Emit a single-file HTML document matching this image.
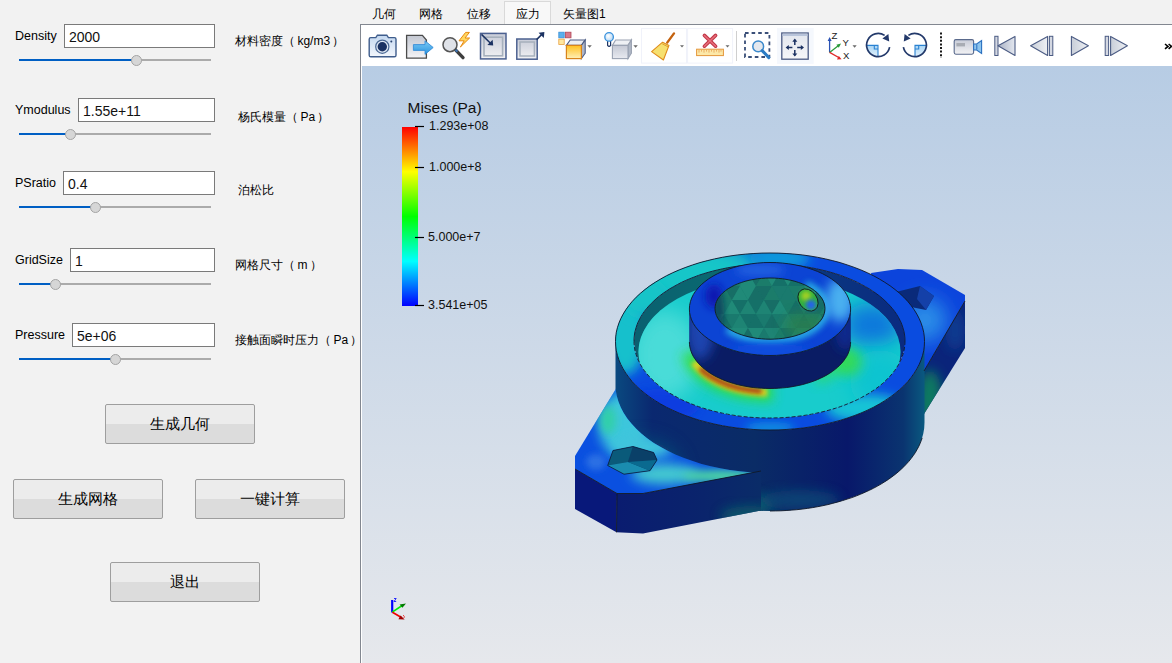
<!DOCTYPE html>
<html><head><meta charset="utf-8">
<style>
*{box-sizing:border-box;margin:0;padding:0}
html,body{width:1172px;height:663px;overflow:hidden;background:#f2f2f2;font-family:"Liberation Sans",sans-serif;color:#000;position:relative}
.a{position:absolute;white-space:nowrap}
.lbl{font-size:12.5px;line-height:14px}
.inp{position:absolute;background:#fff;border:1px solid #7a7a7a;font-size:14px;line-height:24px;padding-left:4px;color:#111}
.trk{position:absolute;height:2px;background:#ababab}
.fill{position:absolute;left:0;top:0;height:2px;background:#005fc4}
.hdl{position:absolute;width:11px;height:11px;border-radius:50%;background:#d6d6d6;border:1px solid #a4a4a4;top:-4.5px}
.cn{font-size:12px;line-height:14px}
.btn{position:absolute;border:1px solid #9e9e9e;border-radius:2px;background:linear-gradient(#ececec 0,#ececec 50%,#dcdcdc 50%,#dcdcdc 100%);font-size:15px;text-align:center}
.tab{position:absolute;top:5.5px;font-size:12px;line-height:16px}
</style></head>
<body>
<!-- left panel -->
<div class="a lbl" style="left:15px;top:29px">Density</div>
<div class="inp" style="left:64px;top:24px;width:151px;height:24px">2000</div>
<div class="trk" style="left:19px;top:59px;width:192px"><div class="fill" style="width:118px"></div><div class="hdl" style="left:112px"></div></div>
<div class="a cn" style="left:235px;top:34px">材料密度（&#8201;kg/m3&#8201;）</div>

<div class="a lbl" style="left:15px;top:103px">Ymodulus</div>
<div class="inp" style="left:78px;top:98px;width:137px;height:24px">1.55e+11</div>
<div class="trk" style="left:19px;top:133px;width:192px"><div class="fill" style="width:52px"></div><div class="hdl" style="left:46px"></div></div>
<div class="a cn" style="left:238px;top:110px">杨氏模量（&#8201;Pa&#8201;）</div>

<div class="a lbl" style="left:15px;top:176px">PSratio</div>
<div class="inp" style="left:63px;top:171px;width:152px;height:24px">0.4</div>
<div class="trk" style="left:19px;top:206px;width:192px"><div class="fill" style="width:77px"></div><div class="hdl" style="left:71px"></div></div>
<div class="a cn" style="left:238px;top:183px">泊松比</div>

<div class="a lbl" style="left:15px;top:253px">GridSize</div>
<div class="inp" style="left:70px;top:248px;width:145px;height:24px">1</div>
<div class="trk" style="left:19px;top:283px;width:192px"><div class="fill" style="width:37px"></div><div class="hdl" style="left:31px"></div></div>
<div class="a cn" style="left:235px;top:258px">网格尺寸（&#8201;m&#8201;）</div>

<div class="a lbl" style="left:15px;top:328px">Pressure</div>
<div class="inp" style="left:72px;top:323px;width:143px;height:24px">5e+06</div>
<div class="trk" style="left:19px;top:358px;width:192px"><div class="fill" style="width:97px"></div><div class="hdl" style="left:91px"></div></div>
<div class="a cn" style="left:235px;top:333px">接触面瞬时压力（&#8201;Pa&#8201;）</div>

<div class="btn" style="left:105px;top:404px;width:150px;height:40px;line-height:38px">生成几何</div>
<div class="btn" style="left:13px;top:479px;width:150px;height:40px;line-height:38px">生成网格</div>
<div class="btn" style="left:195px;top:479px;width:150px;height:40px;line-height:38px">一键计算</div>
<div class="btn" style="left:110px;top:562px;width:150px;height:40px;line-height:38px">退出</div>

<!-- tabs -->
<div class="a" style="left:504px;top:1px;width:47px;height:24px;background:#f8f8f8;border:1px solid #d9d9d9;border-bottom:none"></div>
<div class="tab" style="left:372px">几何</div>
<div class="tab" style="left:419px">网格</div>
<div class="tab" style="left:467px">位移</div>
<div class="tab" style="left:516px">应力</div>
<div class="tab" style="left:563px">矢量图1</div>

<!-- main panel frame -->
<div class="a" style="left:360px;top:24px;width:812px;height:639px;border-left:1px solid #828790;border-top:1px solid #828790;background:#fff"></div>
<div id="view" class="a" style="left:362px;top:66px;width:810px;height:597px;background:linear-gradient(#b7cce4 0%,#e6e8ec 100%)"></div>

<!-- toolbar -->
<!--TB-->
<svg class="a" style="left:361px;top:25px" width="811" height="41" viewBox="361 25 811 41">
<defs>
<linearGradient id="gCam" x1="0" y1="0" x2="0" y2="1"><stop offset="0" stop-color="#c4d8f0"/><stop offset="1" stop-color="#f2f6fc"/></linearGradient>
<linearGradient id="gPage" x1="0" y1="0" x2="0" y2="1"><stop offset="0" stop-color="#c4c8d2"/><stop offset="1" stop-color="#f4f4f6"/></linearGradient>
<linearGradient id="gArr" x1="0" y1="0" x2="0" y2="1"><stop offset="0" stop-color="#7ccaf4"/><stop offset="1" stop-color="#2a94e0"/></linearGradient>
<linearGradient id="gPan" x1="0" y1="0" x2="0" y2="1"><stop offset="0" stop-color="#e2e6ee"/><stop offset="1" stop-color="#f6f6f8"/></linearGradient>
<linearGradient id="gSq" x1="0" y1="0" x2="0" y2="1"><stop offset="0" stop-color="#c8ccd8"/><stop offset="1" stop-color="#f2f2f4"/></linearGradient>
<linearGradient id="gYel" x1="0" y1="0" x2="0" y2="1"><stop offset="0" stop-color="#ffc020"/><stop offset="1" stop-color="#fff0b8"/></linearGradient>
<linearGradient id="gGry" x1="0" y1="0" x2="0" y2="1"><stop offset="0" stop-color="#c4c8d4"/><stop offset="1" stop-color="#e8eaf0"/></linearGradient>
<linearGradient id="gQ" x1="0" y1="0" x2="0" y2="1"><stop offset="0" stop-color="#a8d4f4"/><stop offset="1" stop-color="#e4f2fc"/></linearGradient>
<linearGradient id="gTri" x1="0" y1="0" x2="1" y2="0"><stop offset="0" stop-color="#aab2c4"/><stop offset="1" stop-color="#e4e8f0"/></linearGradient>
<linearGradient id="gTri2" x1="0" y1="0" x2="1" y2="0"><stop offset="0" stop-color="#c8ced8"/><stop offset="1" stop-color="#eef0f4"/></linearGradient>
<radialGradient id="gBulb" cx="0.4" cy="0.4" r="0.6"><stop offset="0" stop-color="#ffffff"/><stop offset="1" stop-color="#b8d8f4"/></radialGradient>
</defs>
<!-- camera -->
<path d="M369.2 39.2 Q369.2 37.6 370.8 37.6 L375.8 37.6 L377.4 35.2 L386.8 35.2 L388.4 37.6 L394.4 37.6 Q396 37.6 396 39.2 L396 55.2 Q396 56.8 394.4 56.8 L370.8 56.8 Q369.2 56.8 369.2 55.2 Z" fill="url(#gCam)" stroke="#3f5d8c" stroke-width="1.4"/>
<circle cx="382.3" cy="46.7" r="6.6" fill="#dfe8f4" stroke="#4a6894" stroke-width="1.2"/>
<circle cx="382.3" cy="46.7" r="4.7" fill="#1b3263"/>
<circle cx="391.3" cy="41.6" r="1" fill="#2a4470"/>
<!-- file arrow -->
<path d="M406.6 35.4 L422.4 35.4 L426.4 40 L426.4 58.2 L406.6 58.2 Z" fill="url(#gPage)" stroke="#4b4b4b" stroke-width="1.3"/>
<path d="M413.4 44.6 L425 44.6 L425 40.8 L433.2 47.5 L425 54.4 L425 50.4 L413.4 50.4 Z" fill="url(#gArr)" stroke="#2b86d6" stroke-width="0.8"/>
<!-- magnifier + lightning -->
<path d="M465.6 32.4 L459 40.8 L464.2 40.8 L460.4 47 L469.6 38 L465 38 L469.4 32.4 Z" fill="#ffd860" stroke="#e88a10" stroke-width="1"/>
<circle cx="450" cy="44.7" r="7" fill="#dfe2e8" stroke="#555" stroke-width="1.5"/>
<path d="M456 50.4 L463 57.6" stroke="#3e3e3e" stroke-width="3.4" stroke-linecap="round"/>
<path d="M455.5 49.8 L457.4 51.8" stroke="#3a70b0" stroke-width="2"/>
<!-- square arrow in -->
<rect x="480.5" y="33.4" width="25.5" height="25.5" fill="url(#gSq)" stroke="#4c6190" stroke-width="1.5"/>
<rect x="484" y="37.2" width="18.6" height="18.6" fill="none" stroke="#a6b0bc" stroke-width="1.6"/>
<path d="M481.5 34.4 L490.5 43.2" stroke="#1c3262" stroke-width="1.5"/>
<path d="M493.2 45.6 L487.4 45 L492.6 39.8 Z" fill="#1c3262"/>
<!-- square arrow out -->
<rect x="516.8" y="39" width="20.4" height="20.2" fill="url(#gSq)" stroke="#4c6190" stroke-width="1.5"/>
<rect x="520" y="42" width="14.4" height="14" fill="none" stroke="#a6b0bc" stroke-width="1.5"/>
<path d="M536.6 39.6 L541.6 34.6" stroke="#1c3262" stroke-width="1.5"/>
<path d="M544.4 32 L543.8 38 L538.6 32.8 Z" fill="#1c3262"/>
<!-- cube color -->
<rect x="558.8" y="32.2" width="5.4" height="5.6" fill="#5ab0ec" stroke="#3a90d8" stroke-width="0.8"/>
<rect x="565.4" y="32.2" width="5.6" height="5.6" fill="#d87888" stroke="#b04858" stroke-width="0.8"/>
<rect x="558.8" y="39.1" width="5.4" height="5.4" fill="#ffe8a0" stroke="#e8a040" stroke-width="0.8"/>
<path d="M566.4 45.4 L570.2 40 L585.2 40 L581.4 45.4 Z" fill="#eceef2" stroke="#4c5c84" stroke-width="1.1"/>
<path d="M581.4 45.4 L585.2 40 L585.2 53.2 L581.4 58.6 Z" fill="#aeb6c8" stroke="#4c5c84" stroke-width="1.1"/>
<rect x="566.4" y="45.4" width="15" height="13.2" fill="url(#gYel)" stroke="#d8841c" stroke-width="1.2"/>
<path d="M587.4 45.2 L591.8 45.2 L589.6 47.8 Z" fill="#6a6a6a"/>
<!-- bulb cube -->
<path d="M612.4 45.4 L615.6 40 L631.4 40 L628 45.4 Z" fill="#eef0f4" stroke="#9aa2b2" stroke-width="1.1"/>
<path d="M628 45.4 L631.4 40 L631.4 53.2 L628 58.6 Z" fill="#b0b8c6" stroke="#9aa2b2" stroke-width="1.1"/>
<rect x="612.4" y="45.4" width="15.6" height="13.2" fill="url(#gGry)" stroke="#9aa2b2" stroke-width="1.1"/>
<path d="M607.6 40.5 L607.6 45.4 Q609 47.4 610.6 45.4 L610.6 40.5" fill="#fff" stroke="#1e3462" stroke-width="1.2"/>
<circle cx="609.1" cy="36.9" r="4.3" fill="url(#gBulb)" stroke="#3a92dc" stroke-width="1.3"/>
<path d="M633.4 45.2 L637.8 45.2 L635.6 47.8 Z" fill="#6a6a6a"/>
<!-- broom -->
<rect x="641.5" y="28.6" width="45" height="34.5" fill="none" stroke="#f0f2fa" stroke-width="1"/>
<rect x="687.6" y="28.6" width="45" height="34.5" fill="none" stroke="#f0f2fa" stroke-width="1"/>
<path d="M674 33.4 L667.2 42.6" stroke="#c4620e" stroke-width="2.4" stroke-linecap="round"/>
<path d="M662.6 42.2 L669 45.4 L663.4 60 L651.6 51.6 Z" fill="#f6e070" stroke="#e08c1a" stroke-width="1.1" stroke-linejoin="round"/>
<path d="M662.2 43.8 L668 46.8" stroke="#e0a030" stroke-width="1"/>
<path d="M680 45.2 L684 45.2 L682 47.6 Z" fill="#6a6a6a"/>
<!-- ruler x -->
<path d="M704.4 35.4 L715.6 46.2 M715.6 35.4 L704.4 46.2" stroke="#c23848" stroke-width="3.6" stroke-linecap="round"/>
<path d="M704.4 35.4 L715.6 46.2 M715.6 35.4 L704.4 46.2" stroke="#e8707c" stroke-width="1.4" stroke-linecap="round"/>
<rect x="696.6" y="49.2" width="26.8" height="6.4" fill="#fce8a8" stroke="#e4963a" stroke-width="1"/>
<path d="M699 50 V52.6 M701.5 50 V51.6 M704 50 V52.6 M706.5 50 V51.6 M709 50 V52.6 M711.5 50 V51.6 M714 50 V52.6 M716.5 50 V51.6 M719 50 V52.6 M721 50 V51.6" stroke="#e8a050" stroke-width="0.8"/>
<path d="M725.5 45.2 L729.5 45.2 L727.5 47.6 Z" fill="#6a6a6a"/>
<!-- separator -->
<line x1="736.5" y1="31" x2="736.5" y2="61" stroke="#cfcfcf" stroke-width="1"/>
<!-- dashed zoom -->
<rect x="745" y="33" width="24.4" height="24" fill="none" stroke="#3a4f78" stroke-width="1.8" stroke-dasharray="3.6 3"/>
<circle cx="758.2" cy="46.4" r="5.4" fill="#e4e8ee" stroke="#3c8acc" stroke-width="1.5"/>
<path d="M762.2 50.6 L768.8 57.6" stroke="#2c7cc4" stroke-width="3" stroke-linecap="round"/>
<!-- pan -->
<rect x="777" y="28" width="36.7" height="35.9" fill="#f5f8fd"/>
<rect x="781.8" y="33" width="26.4" height="26.2" fill="url(#gPan)" stroke="#4a5a82" stroke-width="1.3"/>
<rect x="782.5" y="33.6" width="25" height="2.4" fill="#b8c4da"/>
<g stroke="#1c3262" stroke-width="1.5" fill="none"><path d="M787 47.5 H792.4 M797.2 47.5 H802.6 M794.8 39.8 V45 M794.8 50 V55.4"/></g>
<g fill="#1c3262"><path d="M785.6 47.5 L788.8 45 L788.8 50 Z"/><path d="M804 47.5 L800.8 45 L800.8 50 Z"/><path d="M794.8 38.6 L792.3 41.8 L797.3 41.8 Z"/><path d="M794.8 56.6 L792.3 53.4 L797.3 53.4 Z"/></g>
<!-- axes -->
<path d="M829.6 52.4 V39" stroke="#2a52b4" stroke-width="1.3"/><path d="M829.6 37 L827.6 41 L831.6 41 Z" fill="#2a52b4"/>
<path d="M829.6 52.4 L839.2 45" stroke="#2a9a3a" stroke-width="1.3"/><path d="M841 43.6 L836.4 44.8 L838.8 47.8 Z" fill="#2a9a3a"/>
<path d="M829.6 52.4 L839.6 58" stroke="#e02828" stroke-width="1.3"/><path d="M841.6 59.2 L837 59.6 L838.8 56 Z" fill="#e02828"/>
<g font-family="Liberation Sans" font-size="9.6" fill="#222"><text x="831.6" y="38.6">Z</text><text x="842.6" y="46.2">Y</text><text x="843" y="58.8">X</text></g>
<path d="M852.5 45.2 L856.7 45.2 L854.6 47.8 Z" fill="#6a6a6a"/>
<!-- rotate cw -->
<path d="M878 45.4 L866.4 45.4 A11.6 11.6 0 0 0 878 57 Z" fill="url(#gQ)"/>
<path d="M866.4 45.4 H878 V57 M874.3 45.4 V49 H878" fill="none" stroke="#2a82d2" stroke-width="1.1"/>
<path d="M889.6 47.2 A11.6 11.6 0 1 1 884.6 35.4" fill="none" stroke="#23396a" stroke-width="1.7"/>
<path d="M882.4 38.6 L888.4 34 L889.2 41.4 Z" fill="#23396a"/>
<!-- rotate ccw -->
<path d="M915 45.4 L926.6 45.4 A11.6 11.6 0 0 1 915 57 Z" fill="url(#gQ)"/>
<path d="M926.6 45.4 H915 V57 M918.7 45.4 V49 H915" fill="none" stroke="#23396a" stroke-width="0" />
<path d="M926.6 45.4 H915 V57 M918.7 45.4 V49 H915" fill="none" stroke="#2a82d2" stroke-width="1.1"/>
<path d="M903.4 47.2 A11.6 11.6 0 1 0 908.4 35.4" fill="none" stroke="#23396a" stroke-width="1.7"/>
<path d="M910.6 38.6 L904.6 34 L903.8 41.4 Z" fill="#23396a"/>
<!-- dotted separator -->
<line x1="941" y1="32.6" x2="941" y2="58" stroke="#000" stroke-width="1.8" stroke-dasharray="2 1.6"/>
<!-- video camera -->
<rect x="954.2" y="39.6" width="19.4" height="14.6" rx="1.6" fill="url(#gSq)" stroke="#5a6a8c" stroke-width="1.1"/>
<rect x="956.4" y="43" width="8.6" height="3.4" fill="#a8acb4"/>
<path d="M973.6 44 L976.6 44 L981.6 40.6 L981.6 53.4 L976.6 50 L973.6 50 Z" fill="#8cc4ee" stroke="#2a70c0" stroke-width="1.1"/><path d="M976.8 44.4 V49.6" stroke="#2a70c0" stroke-width="1"/>
<!-- first -->
<rect x="994.8" y="36.3" width="3.2" height="19.2" fill="#d4d8e2" stroke="#4c5c84" stroke-width="1"/>
<path d="M998 45.8 L1015 36.4 L1015 55.4 Z" fill="url(#gTri)" stroke="#4c5c84" stroke-width="1.1" stroke-linejoin="round"/>
<!-- prev -->
<path d="M1030.6 45.8 L1047.6 36.4 L1047.6 55.4 Z" fill="url(#gTri2)" stroke="#4c5c84" stroke-width="1.1" stroke-linejoin="round"/>
<rect x="1049.4" y="36.3" width="3.4" height="19.2" fill="#d4d8e2" stroke="#4c5c84" stroke-width="1"/>
<!-- play -->
<path d="M1071.4 36.4 L1071.4 55.4 L1088.4 45.8 Z" fill="url(#gTri2)" stroke="#4c5c84" stroke-width="1.1" stroke-linejoin="round"/>
<!-- last -->
<rect x="1105.2" y="36.3" width="3.4" height="19.2" fill="#d4d8e2" stroke="#4c5c84" stroke-width="1"/>
<path d="M1110.6 36.4 L1110.6 55.4 L1127.4 45.8 Z" fill="url(#gTri2)" stroke="#4c5c84" stroke-width="1.1" stroke-linejoin="round"/>
<!-- chevrons -->
<path d="M1165 44 L1168 46.4 L1165 48.8 M1168.6 44 L1171.6 46.4 L1168.6 48.8" fill="none" stroke="#000" stroke-width="1.6"/>
</svg>
<!--/TB-->

<!-- legend -->
<svg class="a" style="left:362px;top:66px" width="810" height="597" viewBox="362 66 810 597">
<defs>
<linearGradient id="rb" x1="0" y1="0" x2="0" y2="1">
<stop offset="0" stop-color="#ff0000"/><stop offset="0.25" stop-color="#ffff00"/><stop offset="0.5" stop-color="#00ff00"/><stop offset="0.75" stop-color="#00ffff"/><stop offset="1" stop-color="#0000ff"/>
</linearGradient>
</defs>
<rect x="402" y="127" width="16" height="179" fill="url(#rb)"/>
<g stroke="#000" stroke-width="1.2">
<line x1="415" y1="126.5" x2="424" y2="126.5"/>
<line x1="415" y1="167.5" x2="424" y2="167.5"/>
<line x1="415" y1="237.5" x2="424" y2="237.5"/>
<line x1="415" y1="305.5" x2="424" y2="305.5"/>
</g>
<g font-family="Liberation Sans" font-size="12.5" fill="#111">
<text x="429" y="130">1.293e+08</text>
<text x="429" y="171">1.000e+8</text>
<text x="428" y="241">5.000e+7</text>
<text x="428" y="308.5">3.541e+05</text>
</g>
<text x="407.5" y="112.5" font-family="Liberation Sans" font-size="15.5" fill="#111">Mises (Pa)</text>
<!--AX-->
<g>
<path d="M392.2 612.5 L392.2 600" stroke="#0000ff" stroke-width="2.2"/>
<path d="M394 598.5 L396.2 598.5 L394 601.5 L396.2 601.5" stroke="#0000ff" stroke-width="0.8" fill="none"/>
<path d="M392.2 612.2 L403 605" stroke="#00ee00" stroke-width="1.6"/>
<path d="M406 603.4 L399.6 604.4 L402.4 607.8 Z" fill="#007a00"/>
<path d="M392.4 612.2 L401 617.2" stroke="#ee0000" stroke-width="1.6"/>
<path d="M404.6 619.4 L398.4 619.2 L400.6 615.6 Z" fill="#a00000"/>
<path d="M403 615 Q405 616 404 618" stroke="#ee0000" stroke-width="0.7" fill="none"/>
</g>
<!--/AX-->
<!--MODEL-->
<defs>
<filter id="b2" x="-50%" y="-50%" width="200%" height="200%"><feGaussianBlur stdDeviation="2"/></filter>
<filter id="b3" x="-50%" y="-50%" width="200%" height="200%"><feGaussianBlur stdDeviation="3"/></filter>
<filter id="b4" x="-50%" y="-50%" width="200%" height="200%"><feGaussianBlur stdDeviation="4"/></filter>
<filter id="b6" x="-50%" y="-50%" width="200%" height="200%"><feGaussianBlur stdDeviation="6"/></filter>
<filter id="b10" x="-80%" y="-80%" width="260%" height="260%"><feGaussianBlur stdDeviation="10"/></filter>
</defs>
<clipPath id="cRT"><path d="M871.0 273.0 L898.0 269.0 L922.0 270.0 L965.0 295.0 L965.0 301.0 L924.0 371.0 L880.0 330.0 Z" clip-rule="nonzero"/></clipPath>
<clipPath id="cRF"><path d="M965.0 301.0 L965.0 348.0 L924.0 414.0 L924.0 371.0 Z" clip-rule="nonzero"/></clipPath>
<path d="M871.0 273.0 L898.0 269.0 L922.0 270.0 L965.0 295.0 L965.0 301.0 L924.0 371.0 L880.0 330.0 Z" fill="#0c44dc"/>
<g clip-path="url(#cRT)"><ellipse cx="925" cy="320" rx="22" ry="22" fill="#2a8ee8" filter="url(#b10)" opacity="1"/></g>
<path d="M965.0 301.0 L965.0 348.0 L924.0 414.0 L924.0 371.0 Z" fill="#0a247a"/>
<g clip-path="url(#cRF)"><ellipse cx="930" cy="400" rx="12" ry="30" fill="#0a7a60" filter="url(#b6)" opacity="1"/><ellipse cx="955" cy="330" rx="10" ry="20" fill="#0a3a90" filter="url(#b6)" opacity="1"/></g>
<path d="M896 292 L920 286 L934 296 L926 310 L906 306 Z" fill="#0a2a7a"/>
<path d="M920 286 L934 296 L926 310 L917 299 Z" fill="#1440a8"/>
<clipPath id="cCyl"><path d="M924.5 422.5 L924.2 428.3 L923.2 434.1 L921.5 439.8 L919.2 445.4 L916.3 450.9 L912.7 456.4 L908.6 461.6 L903.8 466.8 L898.5 471.7 L892.6 476.4 L886.2 480.9 L879.2 485.1 L871.9 489.0 L864.1 492.7 L855.8 496.1 L847.2 499.1 L838.3 501.9 L829.1 504.3 L819.7 506.3 L810.0 508.0 L800.1 509.3 L790.2 510.2 L780.1 510.8 L770.0 511.0 L759.9 510.8 L749.8 510.2 L739.9 509.3 L730.0 508.0 L720.3 506.3 L710.9 504.3 L701.7 501.9 L692.8 499.1 L684.2 496.1 L675.9 492.7 L668.1 489.0 L660.8 485.1 L653.8 480.9 L647.4 476.4 L641.5 471.7 L636.2 466.8 L631.4 461.6 L627.3 456.4 L623.7 450.9 L620.8 445.4 L618.5 439.8 L616.8 434.1 L615.8 428.3 L615.5 422.5 L615.5 341.5 L615.8 347.3 L616.8 353.1 L618.5 358.8 L620.8 364.4 L623.7 369.9 L627.3 375.4 L631.4 380.6 L636.2 385.8 L641.5 390.7 L647.4 395.4 L653.8 399.9 L660.8 404.1 L668.1 408.0 L675.9 411.7 L684.2 415.1 L692.8 418.1 L701.7 420.9 L710.9 423.3 L720.3 425.3 L730.0 427.0 L739.9 428.3 L749.8 429.2 L759.9 429.8 L770.0 430.0 L780.1 429.8 L790.2 429.2 L800.1 428.3 L810.0 427.0 L819.7 425.3 L829.1 423.3 L838.3 420.9 L847.2 418.1 L855.8 415.1 L864.1 411.7 L871.9 408.0 L879.2 404.1 L886.2 399.9 L892.6 395.4 L898.5 390.7 L903.8 385.8 L908.6 380.6 L912.7 375.4 L916.3 369.9 L919.2 364.4 L921.5 358.8 L923.2 353.1 L924.2 347.3 L924.5 341.5 Z" clip-rule="nonzero"/></clipPath>
<linearGradient id="gCylH" x1="615" y1="0" x2="925" y2="0" gradientUnits="userSpaceOnUse"><stop offset="0" stop-color="#0a4a80"/><stop offset="0.12" stop-color="#0a2870"/><stop offset="0.45" stop-color="#0a2c66"/><stop offset="0.75" stop-color="#08186a"/><stop offset="0.93" stop-color="#0a3470"/><stop offset="1" stop-color="#0a5a80"/></linearGradient>
<path d="M924.5 422.5 L924.2 428.3 L923.2 434.1 L921.5 439.8 L919.2 445.4 L916.3 450.9 L912.7 456.4 L908.6 461.6 L903.8 466.8 L898.5 471.7 L892.6 476.4 L886.2 480.9 L879.2 485.1 L871.9 489.0 L864.1 492.7 L855.8 496.1 L847.2 499.1 L838.3 501.9 L829.1 504.3 L819.7 506.3 L810.0 508.0 L800.1 509.3 L790.2 510.2 L780.1 510.8 L770.0 511.0 L759.9 510.8 L749.8 510.2 L739.9 509.3 L730.0 508.0 L720.3 506.3 L710.9 504.3 L701.7 501.9 L692.8 499.1 L684.2 496.1 L675.9 492.7 L668.1 489.0 L660.8 485.1 L653.8 480.9 L647.4 476.4 L641.5 471.7 L636.2 466.8 L631.4 461.6 L627.3 456.4 L623.7 450.9 L620.8 445.4 L618.5 439.8 L616.8 434.1 L615.8 428.3 L615.5 422.5 L615.5 341.5 L615.8 347.3 L616.8 353.1 L618.5 358.8 L620.8 364.4 L623.7 369.9 L627.3 375.4 L631.4 380.6 L636.2 385.8 L641.5 390.7 L647.4 395.4 L653.8 399.9 L660.8 404.1 L668.1 408.0 L675.9 411.7 L684.2 415.1 L692.8 418.1 L701.7 420.9 L710.9 423.3 L720.3 425.3 L730.0 427.0 L739.9 428.3 L749.8 429.2 L759.9 429.8 L770.0 430.0 L780.1 429.8 L790.2 429.2 L800.1 428.3 L810.0 427.0 L819.7 425.3 L829.1 423.3 L838.3 420.9 L847.2 418.1 L855.8 415.1 L864.1 411.7 L871.9 408.0 L879.2 404.1 L886.2 399.9 L892.6 395.4 L898.5 390.7 L903.8 385.8 L908.6 380.6 L912.7 375.4 L916.3 369.9 L919.2 364.4 L921.5 358.8 L923.2 353.1 L924.2 347.3 L924.5 341.5 Z" fill="url(#gCylH)"/>
<g clip-path="url(#cCyl)">
<ellipse cx="640" cy="470" rx="40" ry="30" fill="#0a5a7a" filter="url(#b10)" opacity="0.8"/>
<ellipse cx="730" cy="505" rx="45" ry="12" fill="#0a6470" filter="url(#b6)" opacity="0.9"/>
<ellipse cx="800" cy="500" rx="40" ry="10" fill="#0a4a78" filter="url(#b6)" opacity="0.8"/>
</g>
<clipPath id="cNotEF"><path d="M300 200 L1100 200 L1100 600 L300 600 Z M924.5 384.5 L924.2 390.3 L923.2 396.1 L921.5 401.8 L919.2 407.4 L916.3 412.9 L912.7 418.4 L908.6 423.6 L903.8 428.8 L898.5 433.7 L892.6 438.4 L886.2 442.9 L879.2 447.1 L871.9 451.0 L864.1 454.7 L855.8 458.1 L847.2 461.1 L838.3 463.9 L829.1 466.3 L819.7 468.3 L810.0 470.0 L800.1 471.3 L790.2 472.2 L780.1 472.8 L770.0 473.0 L759.9 472.8 L749.8 472.2 L739.9 471.3 L730.0 470.0 L720.3 468.3 L710.9 466.3 L701.7 463.9 L692.8 461.1 L684.2 458.1 L675.9 454.7 L668.1 451.0 L660.8 447.1 L653.8 442.9 L647.4 438.4 L641.5 433.7 L636.2 428.8 L631.4 423.6 L627.3 418.4 L623.7 412.9 L620.8 407.4 L618.5 401.8 L616.8 396.1 L615.8 390.3 L615.5 384.5 L615.8 378.7 L616.8 372.9 L618.5 367.2 L620.8 361.6 L623.7 356.1 L627.3 350.6 L631.4 345.4 L636.2 340.2 L641.5 335.3 L647.4 330.6 L653.8 326.1 L660.8 321.9 L668.1 318.0 L675.9 314.3 L684.2 310.9 L692.7 307.9 L701.7 305.1 L710.9 302.7 L720.3 300.7 L730.0 299.0 L739.9 297.7 L749.8 296.8 L759.9 296.2 L770.0 296.0 L780.1 296.2 L790.2 296.8 L800.1 297.7 L810.0 299.0 L819.7 300.7 L829.1 302.7 L838.3 305.1 L847.2 307.9 L855.8 310.9 L864.1 314.3 L871.9 318.0 L879.2 321.9 L886.2 326.1 L892.6 330.6 L898.5 335.3 L903.8 340.2 L908.6 345.4 L912.7 350.6 L916.3 356.1 L919.2 361.6 L921.5 367.2 L923.2 372.9 L924.2 378.7 L924.5 384.5 Z" clip-rule="evenodd"/></clipPath>
<clipPath id="cLT"><path d="M617.0 387.0 L575.0 456.0 L575.0 469.0 L617.0 493.5 L643.0 493.5 L761.0 471.0 L775.0 440.0 L700.0 380.0 Z" clip-rule="nonzero"/></clipPath>
<clipPath id="cLF"><path d="M617.0 493.5 L616.5 532.3 L643.0 533.6 L761.0 510.5 L761.0 471.0 L643.0 493.5 Z" clip-rule="nonzero"/></clipPath>
<g clip-path="url(#cNotEF)">
<path d="M617.0 387.0 L575.0 456.0 L575.0 469.0 L617.0 493.5 L643.0 493.5 L761.0 471.0 L775.0 440.0 L700.0 380.0 Z" fill="#0a50e0"/>
<g clip-path="url(#cLT)"><ellipse cx="625" cy="425" rx="26" ry="34" fill="#3cc6dc" filter="url(#b6)" opacity="1"/><ellipse cx="608" cy="420" rx="8" ry="14" fill="#30d0a8" filter="url(#b4)" opacity="1"/><ellipse cx="665" cy="474" rx="34" ry="10" fill="#44ccd0" filter="url(#b6)" opacity="1"/><ellipse cx="720" cy="476" rx="38" ry="6" fill="#50dca0" filter="url(#b4)" opacity="1"/><ellipse cx="645" cy="447" rx="28" ry="12" fill="#40c4dc" filter="url(#b6)" opacity="1"/><ellipse cx="596" cy="462" rx="10" ry="8" fill="#2a70e4" filter="url(#b3)" opacity="1"/></g>
</g>
<path d="M575.0 469.0 L575.0 509.0 L616.5 532.3 L617.0 493.5 Z" fill="#08187a"/>
<linearGradient id="gLF" x1="617" y1="0" x2="761" y2="0" gradientUnits="userSpaceOnUse"><stop offset="0" stop-color="#0a1c70"/><stop offset="0.6" stop-color="#0a246c"/><stop offset="1" stop-color="#0a2c68"/></linearGradient>
<path d="M617.0 493.5 L616.5 532.3 L643.0 533.6 L761.0 510.5 L761.0 471.0 L643.0 493.5 Z" fill="url(#gLF)"/>
<g clip-path="url(#cLF)"><ellipse cx="750" cy="516" rx="30" ry="10" fill="#0a5a6a" filter="url(#b6)" opacity="0.9"/></g>
<path d="M613.0 450.5 L633.0 446.5 L653.6 452.5 L657.0 460.0 L650.0 470.7 L624.0 474.2 L607.7 465.5 Z" fill="#0a4a70"/>
<path d="M613 450.5 L633 446.5 L628 462 L607.7 465.5 Z" fill="#0a5a7a"/>
<path d="M633 446.5 L653.6 452.5 L657 460 L628 462 Z" fill="#0a4068"/>
<path d="M607.7 465.5 L628 462 L650 470.7 L624 474.2 Z" fill="#1a8cb0"/>
<path d="M628 462 L657 460 L650 470.7 Z" fill="#0a6a90"/>
<path d="M613.0 450.5 L633.0 446.5 L653.6 452.5 L657.0 460.0 L650.0 470.7 L624.0 474.2 L607.7 465.5 Z" fill="none" stroke="#0a1a40" stroke-width="0.8"/>
<clipPath id="cRim"><path d="M924.5 341.5 L924.2 347.3 L923.2 353.1 L921.5 358.8 L919.2 364.4 L916.3 369.9 L912.7 375.4 L908.6 380.6 L903.8 385.8 L898.5 390.7 L892.6 395.4 L886.2 399.9 L879.2 404.1 L871.9 408.0 L864.1 411.7 L855.8 415.1 L847.2 418.1 L838.3 420.9 L829.1 423.3 L819.7 425.3 L810.0 427.0 L800.1 428.3 L790.2 429.2 L780.1 429.8 L770.0 430.0 L759.9 429.8 L749.8 429.2 L739.9 428.3 L730.0 427.0 L720.3 425.3 L710.9 423.3 L701.7 420.9 L692.8 418.1 L684.2 415.1 L675.9 411.7 L668.1 408.0 L660.8 404.1 L653.8 399.9 L647.4 395.4 L641.5 390.7 L636.2 385.8 L631.4 380.6 L627.3 375.4 L623.7 369.9 L620.8 364.4 L618.5 358.8 L616.8 353.1 L615.8 347.3 L615.5 341.5 L615.8 335.7 L616.8 329.9 L618.5 324.2 L620.8 318.6 L623.7 313.1 L627.3 307.6 L631.4 302.4 L636.2 297.2 L641.5 292.3 L647.4 287.6 L653.8 283.1 L660.8 278.9 L668.1 275.0 L675.9 271.3 L684.2 267.9 L692.7 264.9 L701.7 262.1 L710.9 259.7 L720.3 257.7 L730.0 256.0 L739.9 254.7 L749.8 253.8 L759.9 253.2 L770.0 253.0 L780.1 253.2 L790.2 253.8 L800.1 254.7 L810.0 256.0 L819.7 257.7 L829.1 259.7 L838.3 262.1 L847.2 264.9 L855.8 267.9 L864.1 271.3 L871.9 275.0 L879.2 278.9 L886.2 283.1 L892.6 287.6 L898.5 292.3 L903.8 297.2 L908.6 302.4 L912.7 307.6 L916.3 313.1 L919.2 318.6 L921.5 324.2 L923.2 329.9 L924.2 335.7 L924.5 341.5 Z M905.0 341.0 L904.7 346.0 L903.8 351.1 L902.4 356.0 L900.4 360.9 L897.8 365.8 L894.7 370.5 L891.0 375.1 L886.8 379.5 L882.2 383.8 L877.0 387.9 L871.4 391.8 L865.3 395.4 L858.8 398.9 L852.0 402.1 L844.8 405.0 L837.2 407.7 L829.4 410.1 L821.4 412.1 L813.1 413.9 L804.6 415.4 L795.9 416.5 L787.2 417.3 L778.4 417.8 L769.5 418.0 L760.6 417.8 L751.8 417.3 L743.1 416.5 L734.4 415.4 L725.9 413.9 L717.6 412.1 L709.6 410.1 L701.8 407.7 L694.2 405.0 L687.0 402.1 L680.2 398.9 L673.7 395.4 L667.6 391.8 L662.0 387.9 L656.8 383.8 L652.2 379.5 L648.0 375.1 L644.3 370.5 L641.2 365.8 L638.6 360.9 L636.6 356.0 L635.2 351.1 L634.3 346.0 L634.0 341.0 L634.3 336.0 L635.2 330.9 L636.6 326.0 L638.6 321.1 L641.2 316.2 L644.3 311.5 L648.0 306.9 L652.2 302.5 L656.8 298.2 L662.0 294.1 L667.6 290.2 L673.7 286.6 L680.2 283.1 L687.0 279.9 L694.2 277.0 L701.8 274.3 L709.6 271.9 L717.6 269.9 L725.9 268.1 L734.4 266.6 L743.1 265.5 L751.8 264.7 L760.6 264.2 L769.5 264.0 L778.4 264.2 L787.2 264.7 L795.9 265.5 L804.6 266.6 L813.1 268.1 L821.4 269.9 L829.4 271.9 L837.2 274.3 L844.8 277.0 L852.0 279.9 L858.8 283.1 L865.3 286.6 L871.4 290.2 L877.0 294.1 L882.2 298.2 L886.8 302.5 L891.0 306.9 L894.7 311.5 L897.8 316.2 L900.4 321.1 L902.4 326.0 L903.8 330.9 L904.7 336.0 L905.0 341.0 Z" clip-rule="evenodd"/></clipPath>
<path d="M924.5 341.5 L924.2 347.3 L923.2 353.1 L921.5 358.8 L919.2 364.4 L916.3 369.9 L912.7 375.4 L908.6 380.6 L903.8 385.8 L898.5 390.7 L892.6 395.4 L886.2 399.9 L879.2 404.1 L871.9 408.0 L864.1 411.7 L855.8 415.1 L847.2 418.1 L838.3 420.9 L829.1 423.3 L819.7 425.3 L810.0 427.0 L800.1 428.3 L790.2 429.2 L780.1 429.8 L770.0 430.0 L759.9 429.8 L749.8 429.2 L739.9 428.3 L730.0 427.0 L720.3 425.3 L710.9 423.3 L701.7 420.9 L692.8 418.1 L684.2 415.1 L675.9 411.7 L668.1 408.0 L660.8 404.1 L653.8 399.9 L647.4 395.4 L641.5 390.7 L636.2 385.8 L631.4 380.6 L627.3 375.4 L623.7 369.9 L620.8 364.4 L618.5 358.8 L616.8 353.1 L615.8 347.3 L615.5 341.5 L615.8 335.7 L616.8 329.9 L618.5 324.2 L620.8 318.6 L623.7 313.1 L627.3 307.6 L631.4 302.4 L636.2 297.2 L641.5 292.3 L647.4 287.6 L653.8 283.1 L660.8 278.9 L668.1 275.0 L675.9 271.3 L684.2 267.9 L692.7 264.9 L701.7 262.1 L710.9 259.7 L720.3 257.7 L730.0 256.0 L739.9 254.7 L749.8 253.8 L759.9 253.2 L770.0 253.0 L780.1 253.2 L790.2 253.8 L800.1 254.7 L810.0 256.0 L819.7 257.7 L829.1 259.7 L838.3 262.1 L847.2 264.9 L855.8 267.9 L864.1 271.3 L871.9 275.0 L879.2 278.9 L886.2 283.1 L892.6 287.6 L898.5 292.3 L903.8 297.2 L908.6 302.4 L912.7 307.6 L916.3 313.1 L919.2 318.6 L921.5 324.2 L923.2 329.9 L924.2 335.7 L924.5 341.5 Z M905.0 341.0 L904.7 346.0 L903.8 351.1 L902.4 356.0 L900.4 360.9 L897.8 365.8 L894.7 370.5 L891.0 375.1 L886.8 379.5 L882.2 383.8 L877.0 387.9 L871.4 391.8 L865.3 395.4 L858.8 398.9 L852.0 402.1 L844.8 405.0 L837.2 407.7 L829.4 410.1 L821.4 412.1 L813.1 413.9 L804.6 415.4 L795.9 416.5 L787.2 417.3 L778.4 417.8 L769.5 418.0 L760.6 417.8 L751.8 417.3 L743.1 416.5 L734.4 415.4 L725.9 413.9 L717.6 412.1 L709.6 410.1 L701.8 407.7 L694.2 405.0 L687.0 402.1 L680.2 398.9 L673.7 395.4 L667.6 391.8 L662.0 387.9 L656.8 383.8 L652.2 379.5 L648.0 375.1 L644.3 370.5 L641.2 365.8 L638.6 360.9 L636.6 356.0 L635.2 351.1 L634.3 346.0 L634.0 341.0 L634.3 336.0 L635.2 330.9 L636.6 326.0 L638.6 321.1 L641.2 316.2 L644.3 311.5 L648.0 306.9 L652.2 302.5 L656.8 298.2 L662.0 294.1 L667.6 290.2 L673.7 286.6 L680.2 283.1 L687.0 279.9 L694.2 277.0 L701.8 274.3 L709.6 271.9 L717.6 269.9 L725.9 268.1 L734.4 266.6 L743.1 265.5 L751.8 264.7 L760.6 264.2 L769.5 264.0 L778.4 264.2 L787.2 264.7 L795.9 265.5 L804.6 266.6 L813.1 268.1 L821.4 269.9 L829.4 271.9 L837.2 274.3 L844.8 277.0 L852.0 279.9 L858.8 283.1 L865.3 286.6 L871.4 290.2 L877.0 294.1 L882.2 298.2 L886.8 302.5 L891.0 306.9 L894.7 311.5 L897.8 316.2 L900.4 321.1 L902.4 326.0 L903.8 330.9 L904.7 336.0 L905.0 341.0 Z" fill="#0a4ce0" fill-rule="evenodd"/>
<g clip-path="url(#cRim)">
<ellipse cx="690" cy="275" rx="75" ry="35" fill="#14c6c8" filter="url(#b10)" opacity="1"/>
<ellipse cx="625" cy="330" rx="22" ry="45" fill="#12c0cc" filter="url(#b6)" opacity="1"/>
<ellipse cx="645" cy="298" rx="22" ry="18" fill="#14c4c8" filter="url(#b6)" opacity="1"/>
<ellipse cx="780" cy="258" rx="30" ry="12" fill="#1098dc" filter="url(#b6)" opacity="1"/>
<ellipse cx="660" cy="405" rx="40" ry="16" fill="#0a3ce0" filter="url(#b4)" opacity="1"/>
<ellipse cx="865" cy="408" rx="40" ry="14" fill="#16c4d6" filter="url(#b6)" opacity="1"/>
<ellipse cx="770" cy="428" rx="25" ry="6" fill="#108ce0" filter="url(#b4)" opacity="1"/>
</g>
<clipPath id="cE1"><path d="M905.0 341.0 L904.7 346.0 L903.8 351.1 L902.4 356.0 L900.4 360.9 L897.8 365.8 L894.7 370.5 L891.0 375.1 L886.8 379.5 L882.2 383.8 L877.0 387.9 L871.4 391.8 L865.3 395.4 L858.8 398.9 L852.0 402.1 L844.8 405.0 L837.2 407.7 L829.4 410.1 L821.4 412.1 L813.1 413.9 L804.6 415.4 L795.9 416.5 L787.2 417.3 L778.4 417.8 L769.5 418.0 L760.6 417.8 L751.8 417.3 L743.1 416.5 L734.4 415.4 L725.9 413.9 L717.6 412.1 L709.6 410.1 L701.8 407.7 L694.2 405.0 L687.0 402.1 L680.2 398.9 L673.7 395.4 L667.6 391.8 L662.0 387.9 L656.8 383.8 L652.2 379.5 L648.0 375.1 L644.3 370.5 L641.2 365.8 L638.6 360.9 L636.6 356.0 L635.2 351.1 L634.3 346.0 L634.0 341.0 L634.3 336.0 L635.2 330.9 L636.6 326.0 L638.6 321.1 L641.2 316.2 L644.3 311.5 L648.0 306.9 L652.2 302.5 L656.8 298.2 L662.0 294.1 L667.6 290.2 L673.7 286.6 L680.2 283.1 L687.0 279.9 L694.2 277.0 L701.8 274.3 L709.6 271.9 L717.6 269.9 L725.9 268.1 L734.4 266.6 L743.1 265.5 L751.8 264.7 L760.6 264.2 L769.5 264.0 L778.4 264.2 L787.2 264.7 L795.9 265.5 L804.6 266.6 L813.1 268.1 L821.4 269.9 L829.4 271.9 L837.2 274.3 L844.8 277.0 L852.0 279.9 L858.8 283.1 L865.3 286.6 L871.4 290.2 L877.0 294.1 L882.2 298.2 L886.8 302.5 L891.0 306.9 L894.7 311.5 L897.8 316.2 L900.4 321.1 L902.4 326.0 L903.8 330.9 L904.7 336.0 L905.0 341.0 Z" clip-rule="nonzero"/></clipPath>
<linearGradient id="gWall" x1="634" y1="0" x2="905" y2="0" gradientUnits="userSpaceOnUse"><stop offset="0" stop-color="#0a6070"/><stop offset="0.35" stop-color="#0a6a70"/><stop offset="0.6" stop-color="#0a3a80"/><stop offset="1" stop-color="#0a2a80"/></linearGradient>
<g clip-path="url(#cE1)">
<ellipse cx="769.5" cy="341.0" rx="135.5" ry="77.0" fill="url(#gWall)"/>
<ellipse cx="769.5" cy="352.0" rx="131.0" ry="75.0" fill="#18cccc"/>
<clipPath id="cE2"><path d="M900.5 352.0 L900.2 356.9 L899.4 361.8 L898.0 366.6 L896.0 371.4 L893.5 376.1 L890.5 380.7 L887.0 385.2 L882.9 389.5 L878.4 393.7 L873.4 397.7 L868.0 401.5 L862.1 405.0 L855.9 408.4 L849.2 411.5 L842.3 414.4 L835.0 417.0 L827.4 419.3 L819.6 421.3 L811.6 423.0 L803.4 424.4 L795.1 425.6 L786.6 426.4 L778.1 426.8 L769.5 427.0 L760.9 426.8 L752.4 426.4 L743.9 425.6 L735.6 424.4 L727.4 423.0 L719.4 421.3 L711.6 419.3 L704.0 417.0 L696.7 414.4 L689.8 411.5 L683.1 408.4 L676.9 405.0 L671.0 401.5 L665.6 397.7 L660.6 393.7 L656.1 389.5 L652.0 385.2 L648.5 380.7 L645.5 376.1 L643.0 371.4 L641.0 366.6 L639.6 361.8 L638.8 356.9 L638.5 352.0 L638.8 347.1 L639.6 342.2 L641.0 337.4 L643.0 332.6 L645.5 327.9 L648.5 323.3 L652.0 318.8 L656.1 314.5 L660.6 310.3 L665.6 306.3 L671.0 302.5 L676.9 299.0 L683.1 295.6 L689.8 292.5 L696.7 289.6 L704.0 287.0 L711.6 284.7 L719.4 282.7 L727.4 281.0 L735.6 279.6 L743.9 278.4 L752.4 277.6 L760.9 277.2 L769.5 277.0 L778.1 277.2 L786.6 277.6 L795.1 278.4 L803.4 279.6 L811.6 281.0 L819.6 282.7 L827.4 284.7 L835.0 287.0 L842.3 289.6 L849.2 292.5 L855.9 295.6 L862.1 299.0 L868.0 302.5 L873.4 306.3 L878.4 310.3 L882.9 314.5 L887.0 318.8 L890.5 323.3 L893.5 327.9 L896.0 332.6 L898.0 337.4 L899.4 342.2 L900.2 347.1 L900.5 352.0 Z" clip-rule="nonzero"/></clipPath>
<g clip-path="url(#cE2)">
<ellipse cx="665" cy="355" rx="35" ry="45" fill="#48dcd8" filter="url(#b10)" opacity="1"/>
<ellipse cx="872" cy="325" rx="30" ry="22" fill="#1078dc" filter="url(#b10)" opacity="1"/>
<ellipse cx="880" cy="380" rx="30" ry="30" fill="#10c4d0" filter="url(#b10)" opacity="1"/>
<ellipse cx="848" cy="362" rx="14" ry="14" fill="#30d860" filter="url(#b6)" opacity="1"/>
</g>
</g>
<path d="M772.8 392.5 L768.9 392.5 L764.9 392.4 L761.0 392.2 L757.1 391.9 L753.2 391.5 L749.4 391.0 L745.6 390.3 L741.9 389.6 L738.2 388.7 L734.7 387.8 L731.2 386.7 L727.8 385.6 L724.5 384.4 L721.3 383.0 L718.2 381.6 L715.2 380.1 L712.4 378.5 L709.7 376.9 L707.2 375.1 L704.8 373.3 L702.6 371.5 L700.5 369.5 L698.6 367.5 L696.8 365.5 L695.3 363.4 L693.9 361.3 L692.7 359.1 L691.7 356.9 L690.8 354.7 L690.2 352.5" fill="none" stroke="#30e030" stroke-width="18" filter="url(#b6)" opacity="0.85"/>
<path d="M767.2 392.5 L764.0 392.4 L760.8 392.2 L757.7 392.0 L754.5 391.6 L751.4 391.2 L748.3 390.8 L745.3 390.3 L742.3 389.7 L739.3 389.0 L736.4 388.3 L733.5 387.5 L730.7 386.6 L727.9 385.7 L725.2 384.7 L722.6 383.6 L720.1 382.5 L717.6 381.3 L715.2 380.1 L712.9 378.8 L710.7 377.5 L708.6 376.1 L706.6 374.7 L704.7 373.2 L702.9 371.7 L701.2 370.2 L699.6 368.6 L698.1 367.0 L696.7 365.3 L695.4 363.6 L694.3 361.9" fill="none" stroke="#d8d020" stroke-width="8" filter="url(#b2)"/>
<path d="M761.6 391.2 L759.1 391.1 L756.6 390.8 L754.1 390.6 L751.6 390.3 L749.1 389.9 L746.7 389.5 L744.3 389.1 L741.9 388.6 L739.5 388.1 L737.2 387.5 L734.9 386.9 L732.7 386.2 L730.4 385.5 L728.2 384.8 L726.1 384.0 L724.0 383.2 L721.9 382.3 L719.9 381.4 L718.0 380.5 L716.1 379.6 L714.2 378.6 L712.4 377.5 L710.7 376.5 L709.0 375.4 L707.4 374.3 L705.8 373.1 L704.3 371.9 L702.9 370.7 L701.5 369.5 L700.2 368.2" fill="none" stroke="#a83010" stroke-width="4.5" filter="url(#b2)"/>
<path d="M847.9 354.0 L847.3 355.1 L846.8 356.1 L846.2 357.1 L845.6 358.2 L844.9 359.2 L844.2 360.2 L843.4 361.2 L842.6 362.1 L841.8 363.1 L840.9 364.1 L840.0 365.0 L839.1 365.9 L838.1 366.9 L837.1 367.8 L836.0 368.7 L834.9 369.6 L833.8 370.4 L832.6 371.3 L831.4 372.1 L830.2 372.9 L828.9 373.7 L827.7 374.5 L826.3 375.3 L825.0 376.0 L823.6 376.7 L822.2 377.4 L820.7 378.1 L819.3 378.8 L817.8 379.5 L816.2 380.1" fill="none" stroke="#30e050" stroke-width="10" filter="url(#b6)" opacity="0.7"/>
<path d="M634.0 341.0 L634.1 338.0 L634.4 335.0 L634.9 331.9 L635.7 329.0 L636.6 326.0 L637.7 323.0 L639.1 320.1 L640.6 317.2 L642.4 314.3 L644.3 311.5 L646.4 308.8 L648.8 306.0 L651.3 303.4 L654.0 300.8 L656.8 298.2 L659.9 295.7 L663.1 293.3 L666.5 291.0 L670.0 288.7 L673.7 286.6 L677.5 284.5 L681.5 282.4 L685.6 280.5 L689.9 278.7 L694.2 277.0 L698.7 275.3 L703.3 273.8 L708.0 272.4 L712.8 271.1 L717.6 269.9 L722.6 268.8 L727.6 267.8 L732.7 266.9 L737.9 266.1 L743.1 265.5 L748.3 264.9 L753.6 264.5 L758.9 264.2 L764.2 264.1 L769.5 264.0 L774.8 264.1 L780.1 264.2 L785.4 264.5 L790.7 264.9 L795.9 265.5 L801.1 266.1 L806.3 266.9 L811.4 267.8 L816.4 268.8 L821.4 269.9 L826.2 271.1 L831.0 272.4 L835.7 273.8 L840.3 275.3 L844.8 277.0 L849.1 278.7 L853.4 280.5 L857.5 282.4 L861.5 284.5 L865.3 286.6 L869.0 288.7 L872.5 291.0 L875.9 293.3 L879.1 295.7 L882.2 298.2 L885.0 300.8 L887.7 303.4 L890.2 306.0 L892.6 308.8 L894.7 311.5 L896.6 314.3 L898.4 317.2 L899.9 320.1 L901.3 323.0 L902.4 326.0 L903.3 329.0 L904.1 331.9 L904.6 335.0 L904.9 338.0 L905.0 341.0" fill="none" stroke="#111a30" stroke-width="0.9"/>
<path d="M905.0 341.0 L904.9 344.0 L904.6 347.0 L904.1 350.1 L903.3 353.0 L902.4 356.0 L901.3 359.0 L899.9 361.9 L898.4 364.8 L896.6 367.7 L894.7 370.5 L892.6 373.2 L890.2 376.0 L887.7 378.6 L885.0 381.2 L882.2 383.8 L879.1 386.3 L875.9 388.7 L872.5 391.0 L869.0 393.3 L865.3 395.4 L861.5 397.5 L857.5 399.6 L853.4 401.5 L849.1 403.3 L844.8 405.0 L840.3 406.7 L835.7 408.2 L831.0 409.6 L826.2 410.9 L821.4 412.1 L816.4 413.2 L811.4 414.2 L806.3 415.1 L801.1 415.9 L795.9 416.5 L790.7 417.1 L785.4 417.5 L780.1 417.8 L774.8 417.9 L769.5 418.0 L764.2 417.9 L758.9 417.8 L753.6 417.5 L748.3 417.1 L743.1 416.5 L737.9 415.9 L732.7 415.1 L727.6 414.2 L722.6 413.2 L717.6 412.1 L712.8 410.9 L708.0 409.6 L703.3 408.2 L698.7 406.7 L694.2 405.0 L689.9 403.3 L685.6 401.5 L681.5 399.6 L677.5 397.5 L673.7 395.4 L670.0 393.3 L666.5 391.0 L663.1 388.7 L659.9 386.3 L656.8 383.8 L654.0 381.2 L651.3 378.6 L648.8 376.0 L646.4 373.2 L644.3 370.5 L642.4 367.7 L640.6 364.8 L639.1 361.9 L637.7 359.0 L636.6 356.0 L635.7 353.0 L634.9 350.1 L634.4 347.0 L634.1 344.0 L634.0 341.0" fill="none" stroke="#111a30" stroke-width="0.9" stroke-dasharray="4 2"/>
<clipPath id="cBoss"><path d="M850.6 342.0 L850.4 345.0 L849.9 348.1 L849.1 351.1 L847.9 354.0 L846.3 356.9 L844.5 359.8 L842.3 362.6 L839.8 365.2 L837.0 367.8 L833.9 370.3 L830.6 372.7 L827.0 374.9 L823.1 377.0 L819.1 378.9 L814.8 380.7 L810.3 382.3 L805.6 383.7 L800.8 385.0 L795.9 386.0 L790.9 386.9 L785.7 387.6 L780.5 388.1 L775.3 388.4 L770.0 388.5 L764.7 388.4 L759.5 388.1 L754.3 387.6 L749.1 386.9 L744.1 386.0 L739.2 385.0 L734.4 383.7 L729.7 382.3 L725.2 380.7 L720.9 378.9 L716.9 377.0 L713.0 374.9 L709.4 372.7 L706.1 370.3 L703.0 367.8 L700.2 365.2 L697.7 362.6 L695.5 359.8 L693.7 356.9 L692.1 354.0 L690.9 351.1 L690.1 348.1 L689.6 345.0 L689.4 342.0 L689.4 309.0 L689.6 312.0 L690.1 315.1 L690.9 318.1 L692.1 321.0 L693.7 323.9 L695.5 326.8 L697.7 329.6 L700.2 332.2 L703.0 334.8 L706.1 337.3 L709.4 339.7 L713.0 341.9 L716.9 344.0 L720.9 345.9 L725.2 347.7 L729.7 349.3 L734.4 350.7 L739.2 352.0 L744.1 353.0 L749.1 353.9 L754.3 354.6 L759.5 355.1 L764.7 355.4 L770.0 355.5 L775.3 355.4 L780.5 355.1 L785.7 354.6 L790.9 353.9 L795.9 353.0 L800.8 352.0 L805.6 350.7 L810.3 349.3 L814.8 347.7 L819.1 345.9 L823.1 344.0 L827.0 341.9 L830.6 339.7 L833.9 337.3 L837.0 334.8 L839.8 332.2 L842.3 329.6 L844.5 326.8 L846.3 323.9 L847.9 321.0 L849.1 318.1 L849.9 315.1 L850.4 312.0 L850.6 309.0 Z" clip-rule="nonzero"/></clipPath>
<path d="M850.6 342.0 L850.4 345.0 L849.9 348.1 L849.1 351.1 L847.9 354.0 L846.3 356.9 L844.5 359.8 L842.3 362.6 L839.8 365.2 L837.0 367.8 L833.9 370.3 L830.6 372.7 L827.0 374.9 L823.1 377.0 L819.1 378.9 L814.8 380.7 L810.3 382.3 L805.6 383.7 L800.8 385.0 L795.9 386.0 L790.9 386.9 L785.7 387.6 L780.5 388.1 L775.3 388.4 L770.0 388.5 L764.7 388.4 L759.5 388.1 L754.3 387.6 L749.1 386.9 L744.1 386.0 L739.2 385.0 L734.4 383.7 L729.7 382.3 L725.2 380.7 L720.9 378.9 L716.9 377.0 L713.0 374.9 L709.4 372.7 L706.1 370.3 L703.0 367.8 L700.2 365.2 L697.7 362.6 L695.5 359.8 L693.7 356.9 L692.1 354.0 L690.9 351.1 L690.1 348.1 L689.6 345.0 L689.4 342.0 L689.4 309.0 L689.6 312.0 L690.1 315.1 L690.9 318.1 L692.1 321.0 L693.7 323.9 L695.5 326.8 L697.7 329.6 L700.2 332.2 L703.0 334.8 L706.1 337.3 L709.4 339.7 L713.0 341.9 L716.9 344.0 L720.9 345.9 L725.2 347.7 L729.7 349.3 L734.4 350.7 L739.2 352.0 L744.1 353.0 L749.1 353.9 L754.3 354.6 L759.5 355.1 L764.7 355.4 L770.0 355.5 L775.3 355.4 L780.5 355.1 L785.7 354.6 L790.9 353.9 L795.9 353.0 L800.8 352.0 L805.6 350.7 L810.3 349.3 L814.8 347.7 L819.1 345.9 L823.1 344.0 L827.0 341.9 L830.6 339.7 L833.9 337.3 L837.0 334.8 L839.8 332.2 L842.3 329.6 L844.5 326.8 L846.3 323.9 L847.9 321.0 L849.1 318.1 L849.9 315.1 L850.4 312.0 L850.6 309.0 Z" fill="#0a1c64"/>
<g clip-path="url(#cBoss)"><ellipse cx="700" cy="330" rx="14" ry="30" fill="#1a44b0" filter="url(#b6)" opacity="1"/><ellipse cx="845" cy="330" rx="10" ry="20" fill="#0a2a90" filter="url(#b6)" opacity="1"/></g>
<clipPath id="cBT"><path d="M850.6 309.0 L850.4 312.0 L849.9 315.1 L849.1 318.1 L847.9 321.0 L846.3 323.9 L844.5 326.8 L842.3 329.6 L839.8 332.2 L837.0 334.8 L833.9 337.3 L830.6 339.7 L827.0 341.9 L823.1 344.0 L819.1 345.9 L814.8 347.7 L810.3 349.3 L805.6 350.7 L800.8 352.0 L795.9 353.0 L790.9 353.9 L785.7 354.6 L780.5 355.1 L775.3 355.4 L770.0 355.5 L764.7 355.4 L759.5 355.1 L754.3 354.6 L749.1 353.9 L744.1 353.0 L739.2 352.0 L734.4 350.7 L729.7 349.3 L725.2 347.7 L720.9 345.9 L716.9 344.0 L713.0 341.9 L709.4 339.7 L706.1 337.3 L703.0 334.8 L700.2 332.2 L697.7 329.6 L695.5 326.8 L693.7 323.9 L692.1 321.0 L690.9 318.1 L690.1 315.1 L689.6 312.0 L689.4 309.0 L689.6 306.0 L690.1 302.9 L690.9 299.9 L692.1 297.0 L693.7 294.1 L695.5 291.2 L697.7 288.4 L700.2 285.8 L703.0 283.2 L706.1 280.7 L709.4 278.3 L713.0 276.1 L716.9 274.0 L720.9 272.1 L725.2 270.3 L729.7 268.7 L734.4 267.3 L739.2 266.0 L744.1 265.0 L749.1 264.1 L754.3 263.4 L759.5 262.9 L764.7 262.6 L770.0 262.5 L775.3 262.6 L780.5 262.9 L785.7 263.4 L790.9 264.1 L795.9 265.0 L800.8 266.0 L805.6 267.3 L810.3 268.7 L814.8 270.3 L819.1 272.1 L823.1 274.0 L827.0 276.1 L830.6 278.3 L833.9 280.7 L837.0 283.2 L839.8 285.8 L842.3 288.4 L844.5 291.2 L846.3 294.1 L847.9 297.0 L849.1 299.9 L849.9 302.9 L850.4 306.0 L850.6 309.0 Z M825.0 308.6 L824.9 310.6 L824.5 312.6 L823.9 314.6 L823.1 316.5 L822.1 318.4 L820.8 320.3 L819.3 322.1 L817.6 323.9 L815.7 325.6 L813.6 327.2 L811.4 328.8 L808.9 330.2 L806.3 331.6 L803.5 332.9 L800.6 334.0 L797.5 335.1 L794.3 336.0 L791.0 336.9 L787.7 337.6 L784.2 338.2 L780.7 338.6 L777.2 338.9 L773.6 339.1 L770.0 339.2 L766.4 339.1 L762.8 338.9 L759.3 338.6 L755.8 338.2 L752.3 337.6 L749.0 336.9 L745.7 336.0 L742.5 335.1 L739.4 334.0 L736.5 332.9 L733.7 331.6 L731.1 330.2 L728.6 328.8 L726.4 327.2 L724.3 325.6 L722.4 323.9 L720.7 322.1 L719.2 320.3 L717.9 318.4 L716.9 316.5 L716.1 314.6 L715.5 312.6 L715.1 310.6 L715.0 308.6 L715.1 306.6 L715.5 304.6 L716.1 302.6 L716.9 300.7 L717.9 298.8 L719.2 296.9 L720.7 295.1 L722.4 293.3 L724.3 291.6 L726.4 290.0 L728.6 288.4 L731.1 287.0 L733.7 285.6 L736.5 284.3 L739.4 283.2 L742.5 282.1 L745.7 281.2 L749.0 280.3 L752.3 279.6 L755.8 279.0 L759.3 278.6 L762.8 278.3 L766.4 278.1 L770.0 278.0 L773.6 278.1 L777.2 278.3 L780.7 278.6 L784.2 279.0 L787.7 279.6 L791.0 280.3 L794.3 281.2 L797.5 282.1 L800.6 283.2 L803.5 284.3 L806.3 285.6 L808.9 287.0 L811.4 288.4 L813.6 290.0 L815.7 291.6 L817.6 293.3 L819.3 295.1 L820.8 296.9 L822.1 298.8 L823.1 300.7 L823.9 302.6 L824.5 304.6 L824.9 306.6 L825.0 308.6 Z" clip-rule="evenodd"/></clipPath>
<path d="M850.6 309.0 L850.4 312.0 L849.9 315.1 L849.1 318.1 L847.9 321.0 L846.3 323.9 L844.5 326.8 L842.3 329.6 L839.8 332.2 L837.0 334.8 L833.9 337.3 L830.6 339.7 L827.0 341.9 L823.1 344.0 L819.1 345.9 L814.8 347.7 L810.3 349.3 L805.6 350.7 L800.8 352.0 L795.9 353.0 L790.9 353.9 L785.7 354.6 L780.5 355.1 L775.3 355.4 L770.0 355.5 L764.7 355.4 L759.5 355.1 L754.3 354.6 L749.1 353.9 L744.1 353.0 L739.2 352.0 L734.4 350.7 L729.7 349.3 L725.2 347.7 L720.9 345.9 L716.9 344.0 L713.0 341.9 L709.4 339.7 L706.1 337.3 L703.0 334.8 L700.2 332.2 L697.7 329.6 L695.5 326.8 L693.7 323.9 L692.1 321.0 L690.9 318.1 L690.1 315.1 L689.6 312.0 L689.4 309.0 L689.6 306.0 L690.1 302.9 L690.9 299.9 L692.1 297.0 L693.7 294.1 L695.5 291.2 L697.7 288.4 L700.2 285.8 L703.0 283.2 L706.1 280.7 L709.4 278.3 L713.0 276.1 L716.9 274.0 L720.9 272.1 L725.2 270.3 L729.7 268.7 L734.4 267.3 L739.2 266.0 L744.1 265.0 L749.1 264.1 L754.3 263.4 L759.5 262.9 L764.7 262.6 L770.0 262.5 L775.3 262.6 L780.5 262.9 L785.7 263.4 L790.9 264.1 L795.9 265.0 L800.8 266.0 L805.6 267.3 L810.3 268.7 L814.8 270.3 L819.1 272.1 L823.1 274.0 L827.0 276.1 L830.6 278.3 L833.9 280.7 L837.0 283.2 L839.8 285.8 L842.3 288.4 L844.5 291.2 L846.3 294.1 L847.9 297.0 L849.1 299.9 L849.9 302.9 L850.4 306.0 L850.6 309.0 Z M825.0 308.6 L824.9 310.6 L824.5 312.6 L823.9 314.6 L823.1 316.5 L822.1 318.4 L820.8 320.3 L819.3 322.1 L817.6 323.9 L815.7 325.6 L813.6 327.2 L811.4 328.8 L808.9 330.2 L806.3 331.6 L803.5 332.9 L800.6 334.0 L797.5 335.1 L794.3 336.0 L791.0 336.9 L787.7 337.6 L784.2 338.2 L780.7 338.6 L777.2 338.9 L773.6 339.1 L770.0 339.2 L766.4 339.1 L762.8 338.9 L759.3 338.6 L755.8 338.2 L752.3 337.6 L749.0 336.9 L745.7 336.0 L742.5 335.1 L739.4 334.0 L736.5 332.9 L733.7 331.6 L731.1 330.2 L728.6 328.8 L726.4 327.2 L724.3 325.6 L722.4 323.9 L720.7 322.1 L719.2 320.3 L717.9 318.4 L716.9 316.5 L716.1 314.6 L715.5 312.6 L715.1 310.6 L715.0 308.6 L715.1 306.6 L715.5 304.6 L716.1 302.6 L716.9 300.7 L717.9 298.8 L719.2 296.9 L720.7 295.1 L722.4 293.3 L724.3 291.6 L726.4 290.0 L728.6 288.4 L731.1 287.0 L733.7 285.6 L736.5 284.3 L739.4 283.2 L742.5 282.1 L745.7 281.2 L749.0 280.3 L752.3 279.6 L755.8 279.0 L759.3 278.6 L762.8 278.3 L766.4 278.1 L770.0 278.0 L773.6 278.1 L777.2 278.3 L780.7 278.6 L784.2 279.0 L787.7 279.6 L791.0 280.3 L794.3 281.2 L797.5 282.1 L800.6 283.2 L803.5 284.3 L806.3 285.6 L808.9 287.0 L811.4 288.4 L813.6 290.0 L815.7 291.6 L817.6 293.3 L819.3 295.1 L820.8 296.9 L822.1 298.8 L823.1 300.7 L823.9 302.6 L824.5 304.6 L824.9 306.6 L825.0 308.6 Z" fill="#0c44d4" fill-rule="evenodd"/>
<g clip-path="url(#cBT)">
<path d="M806.0 284.4 L809.4 286.2 L812.6 288.1 L815.4 290.1 L818.0 292.3 L820.2 294.6 L822.1 297.0 L823.6 299.5 L824.8 302.0 L825.6 304.6 L825.9 307.2 L826.0 309.8 L825.6 312.5 L824.8 315.0 L823.7 317.6 L822.2 320.1 L820.3 322.5 L818.1 324.8 L815.6 327.0 L812.7 329.0 L809.6 330.9 L806.2 332.7 L802.5 334.3 L798.6 335.8 L794.5 337.0 L790.3 338.1 L785.9 338.9 L781.4 339.5 L776.8 340.0 L772.2 340.2 L767.6 340.2 L762.9 339.9 L758.4 339.5 L753.9 338.9 L749.5 338.0 L745.2 336.9 L741.2 335.7 L737.3 334.2 L733.6 332.6 L730.2 330.8 L727.1 328.9" fill="none" stroke="#30c8e8" stroke-width="7" filter="url(#b3)" opacity="0.9"/>
<ellipse cx="840" cy="300" rx="14" ry="22" fill="#48b0f0" filter="url(#b6)" opacity="1"/>
<ellipse cx="714" cy="296" rx="9" ry="12" fill="#0a18b0" filter="url(#b4)" opacity="1"/>
<ellipse cx="760" cy="270" rx="25" ry="6" fill="#2060e0" filter="url(#b4)" opacity="1"/>
<ellipse cx="770" cy="350" rx="40" ry="6" fill="#0c50e0" filter="url(#b4)" opacity="1"/>
</g>
<clipPath id="cBore"><path d="M825.0 308.6 L824.9 310.6 L824.5 312.6 L823.9 314.6 L823.1 316.5 L822.1 318.4 L820.8 320.3 L819.3 322.1 L817.6 323.9 L815.7 325.6 L813.6 327.2 L811.4 328.8 L808.9 330.2 L806.3 331.6 L803.5 332.9 L800.6 334.0 L797.5 335.1 L794.3 336.0 L791.0 336.9 L787.7 337.6 L784.2 338.2 L780.7 338.6 L777.2 338.9 L773.6 339.1 L770.0 339.2 L766.4 339.1 L762.8 338.9 L759.3 338.6 L755.8 338.2 L752.3 337.6 L749.0 336.9 L745.7 336.0 L742.5 335.1 L739.4 334.0 L736.5 332.9 L733.7 331.6 L731.1 330.2 L728.6 328.8 L726.4 327.2 L724.3 325.6 L722.4 323.9 L720.7 322.1 L719.2 320.3 L717.9 318.4 L716.9 316.5 L716.1 314.6 L715.5 312.6 L715.1 310.6 L715.0 308.6 L715.1 306.6 L715.5 304.6 L716.1 302.6 L716.9 300.7 L717.9 298.8 L719.2 296.9 L720.7 295.1 L722.4 293.3 L724.3 291.6 L726.4 290.0 L728.6 288.4 L731.1 287.0 L733.7 285.6 L736.5 284.3 L739.4 283.2 L742.5 282.1 L745.7 281.2 L749.0 280.3 L752.3 279.6 L755.8 279.0 L759.3 278.6 L762.8 278.3 L766.4 278.1 L770.0 278.0 L773.6 278.1 L777.2 278.3 L780.7 278.6 L784.2 279.0 L787.7 279.6 L791.0 280.3 L794.3 281.2 L797.5 282.1 L800.6 283.2 L803.5 284.3 L806.3 285.6 L808.9 287.0 L811.4 288.4 L813.6 290.0 L815.7 291.6 L817.6 293.3 L819.3 295.1 L820.8 296.9 L822.1 298.8 L823.1 300.7 L823.9 302.6 L824.5 304.6 L824.9 306.6 L825.0 308.6 Z" clip-rule="nonzero"/></clipPath>
<ellipse cx="770.0" cy="308.6" rx="55.0" ry="30.6" fill="#187a6c"/>
<g clip-path="url(#cBore)">
<path d="M700.0 272.0 L716.0 272.0 L708.0 286.0 Z" fill="#1a7a6e"/>
<path d="M716.0 272.0 L708.0 286.0 L724.0 286.0 Z" fill="#208a78"/>
<path d="M716.0 272.0 L732.0 272.0 L724.0 286.0 Z" fill="#208a78"/>
<path d="M732.0 272.0 L724.0 286.0 L740.0 286.0 Z" fill="#1a7a6e"/>
<path d="M732.0 272.0 L748.0 272.0 L740.0 286.0 Z" fill="#1e8474"/>
<path d="M748.0 272.0 L740.0 286.0 L756.0 286.0 Z" fill="#208a78"/>
<path d="M748.0 272.0 L764.0 272.0 L756.0 286.0 Z" fill="#176e66"/>
<path d="M764.0 272.0 L756.0 286.0 L772.0 286.0 Z" fill="#1b7c6a"/>
<path d="M764.0 272.0 L780.0 272.0 L772.0 286.0 Z" fill="#208a78"/>
<path d="M780.0 272.0 L772.0 286.0 L788.0 286.0 Z" fill="#157068"/>
<path d="M780.0 272.0 L796.0 272.0 L788.0 286.0 Z" fill="#208a78"/>
<path d="M796.0 272.0 L788.0 286.0 L804.0 286.0 Z" fill="#157068"/>
<path d="M796.0 272.0 L812.0 272.0 L804.0 286.0 Z" fill="#176e66"/>
<path d="M812.0 272.0 L804.0 286.0 L820.0 286.0 Z" fill="#1e8474"/>
<path d="M812.0 272.0 L828.0 272.0 L820.0 286.0 Z" fill="#208a78"/>
<path d="M828.0 272.0 L820.0 286.0 L836.0 286.0 Z" fill="#1a7a6e"/>
<path d="M708.0 286.0 L724.0 286.0 L716.0 300.0 Z" fill="#1a7a6e"/>
<path d="M724.0 286.0 L716.0 300.0 L732.0 300.0 Z" fill="#1b7c6a"/>
<path d="M724.0 286.0 L740.0 286.0 L732.0 300.0 Z" fill="#176e66"/>
<path d="M740.0 286.0 L732.0 300.0 L748.0 300.0 Z" fill="#208a78"/>
<path d="M740.0 286.0 L756.0 286.0 L748.0 300.0 Z" fill="#208a78"/>
<path d="M756.0 286.0 L748.0 300.0 L764.0 300.0 Z" fill="#176e66"/>
<path d="M756.0 286.0 L772.0 286.0 L764.0 300.0 Z" fill="#176e66"/>
<path d="M772.0 286.0 L764.0 300.0 L780.0 300.0 Z" fill="#1b7c6a"/>
<path d="M772.0 286.0 L788.0 286.0 L780.0 300.0 Z" fill="#1a7a6e"/>
<path d="M788.0 286.0 L780.0 300.0 L796.0 300.0 Z" fill="#1a7a6e"/>
<path d="M788.0 286.0 L804.0 286.0 L796.0 300.0 Z" fill="#1b7c6a"/>
<path d="M804.0 286.0 L796.0 300.0 L812.0 300.0 Z" fill="#1a7a6e"/>
<path d="M804.0 286.0 L820.0 286.0 L812.0 300.0 Z" fill="#208a78"/>
<path d="M820.0 286.0 L812.0 300.0 L828.0 300.0 Z" fill="#176e66"/>
<path d="M820.0 286.0 L836.0 286.0 L828.0 300.0 Z" fill="#1b7c6a"/>
<path d="M836.0 286.0 L828.0 300.0 L844.0 300.0 Z" fill="#157068"/>
<path d="M700.0 300.0 L716.0 300.0 L708.0 314.0 Z" fill="#1b7c6a"/>
<path d="M716.0 300.0 L708.0 314.0 L724.0 314.0 Z" fill="#157068"/>
<path d="M716.0 300.0 L732.0 300.0 L724.0 314.0 Z" fill="#1a7a6e"/>
<path d="M732.0 300.0 L724.0 314.0 L740.0 314.0 Z" fill="#208a78"/>
<path d="M732.0 300.0 L748.0 300.0 L740.0 314.0 Z" fill="#157068"/>
<path d="M748.0 300.0 L740.0 314.0 L756.0 314.0 Z" fill="#1e8474"/>
<path d="M748.0 300.0 L764.0 300.0 L756.0 314.0 Z" fill="#157068"/>
<path d="M764.0 300.0 L756.0 314.0 L772.0 314.0 Z" fill="#1e8474"/>
<path d="M764.0 300.0 L780.0 300.0 L772.0 314.0 Z" fill="#176e66"/>
<path d="M780.0 300.0 L772.0 314.0 L788.0 314.0 Z" fill="#208a78"/>
<path d="M780.0 300.0 L796.0 300.0 L788.0 314.0 Z" fill="#1b7c6a"/>
<path d="M796.0 300.0 L788.0 314.0 L804.0 314.0 Z" fill="#176e66"/>
<path d="M796.0 300.0 L812.0 300.0 L804.0 314.0 Z" fill="#1b7c6a"/>
<path d="M812.0 300.0 L804.0 314.0 L820.0 314.0 Z" fill="#176e66"/>
<path d="M812.0 300.0 L828.0 300.0 L820.0 314.0 Z" fill="#176e66"/>
<path d="M828.0 300.0 L820.0 314.0 L836.0 314.0 Z" fill="#1b7c6a"/>
<path d="M708.0 314.0 L724.0 314.0 L716.0 328.0 Z" fill="#208a78"/>
<path d="M724.0 314.0 L716.0 328.0 L732.0 328.0 Z" fill="#176e66"/>
<path d="M724.0 314.0 L740.0 314.0 L732.0 328.0 Z" fill="#1a7a6e"/>
<path d="M740.0 314.0 L732.0 328.0 L748.0 328.0 Z" fill="#1e8474"/>
<path d="M740.0 314.0 L756.0 314.0 L748.0 328.0 Z" fill="#157068"/>
<path d="M756.0 314.0 L748.0 328.0 L764.0 328.0 Z" fill="#157068"/>
<path d="M756.0 314.0 L772.0 314.0 L764.0 328.0 Z" fill="#1a7a6e"/>
<path d="M772.0 314.0 L764.0 328.0 L780.0 328.0 Z" fill="#176e66"/>
<path d="M772.0 314.0 L788.0 314.0 L780.0 328.0 Z" fill="#1a7a6e"/>
<path d="M788.0 314.0 L780.0 328.0 L796.0 328.0 Z" fill="#1e8474"/>
<path d="M788.0 314.0 L804.0 314.0 L796.0 328.0 Z" fill="#1b7c6a"/>
<path d="M804.0 314.0 L796.0 328.0 L812.0 328.0 Z" fill="#176e66"/>
<path d="M804.0 314.0 L820.0 314.0 L812.0 328.0 Z" fill="#1b7c6a"/>
<path d="M820.0 314.0 L812.0 328.0 L828.0 328.0 Z" fill="#1e8474"/>
<path d="M820.0 314.0 L836.0 314.0 L828.0 328.0 Z" fill="#176e66"/>
<path d="M836.0 314.0 L828.0 328.0 L844.0 328.0 Z" fill="#208a78"/>
<path d="M700.0 328.0 L716.0 328.0 L708.0 342.0 Z" fill="#176e66"/>
<path d="M716.0 328.0 L708.0 342.0 L724.0 342.0 Z" fill="#208a78"/>
<path d="M716.0 328.0 L732.0 328.0 L724.0 342.0 Z" fill="#1e8474"/>
<path d="M732.0 328.0 L724.0 342.0 L740.0 342.0 Z" fill="#208a78"/>
<path d="M732.0 328.0 L748.0 328.0 L740.0 342.0 Z" fill="#208a78"/>
<path d="M748.0 328.0 L740.0 342.0 L756.0 342.0 Z" fill="#176e66"/>
<path d="M748.0 328.0 L764.0 328.0 L756.0 342.0 Z" fill="#208a78"/>
<path d="M764.0 328.0 L756.0 342.0 L772.0 342.0 Z" fill="#1a7a6e"/>
<path d="M764.0 328.0 L780.0 328.0 L772.0 342.0 Z" fill="#1e8474"/>
<path d="M780.0 328.0 L772.0 342.0 L788.0 342.0 Z" fill="#1b7c6a"/>
<path d="M780.0 328.0 L796.0 328.0 L788.0 342.0 Z" fill="#157068"/>
<path d="M796.0 328.0 L788.0 342.0 L804.0 342.0 Z" fill="#1e8474"/>
<path d="M796.0 328.0 L812.0 328.0 L804.0 342.0 Z" fill="#208a78"/>
<path d="M812.0 328.0 L804.0 342.0 L820.0 342.0 Z" fill="#1b7c6a"/>
<path d="M812.0 328.0 L828.0 328.0 L820.0 342.0 Z" fill="#1b7c6a"/>
<path d="M828.0 328.0 L820.0 342.0 L836.0 342.0 Z" fill="#1a7a6e"/>
<ellipse cx="718" cy="310" rx="6" ry="22" fill="#0a4a60" filter="url(#b3)" opacity="1"/>
<ellipse cx="805" cy="325" rx="22" ry="12" fill="#2a8050" filter="url(#b6)" opacity="0.8"/>
</g>
<ellipse cx="808" cy="300" rx="9" ry="12" fill="#30b040" transform="rotate(-35 808 300)"/>
<ellipse cx="806" cy="296" rx="5" ry="5" fill="#a0d020" filter="url(#b2)"/>
<ellipse cx="811" cy="305" rx="5" ry="5" fill="#2060f0" filter="url(#b2)"/>
<ellipse cx="808" cy="300" rx="9" ry="12" fill="none" stroke="#102020" stroke-width="0.9" transform="rotate(-35 808 300)"/>
<g fill="none" stroke="#101828" stroke-width="0.9">
<path d="M615.5 341.5 L615.7 336.9 L616.3 332.2 L617.4 327.7 L618.9 323.1 L620.8 318.6 L623.1 314.2 L625.8 309.8 L628.9 305.5 L632.3 301.3 L636.2 297.2 L640.4 293.3 L645.0 289.5 L649.9 285.8 L655.2 282.3 L660.8 278.9 L666.6 275.7 L672.8 272.7 L679.2 269.9 L685.9 267.3 L692.7 264.9 L699.9 262.6 L707.2 260.7 L714.6 258.9 L722.3 257.3 L730.0 256.0 L737.9 254.9 L745.8 254.1 L753.9 253.5 L761.9 253.1 L770.0 253.0 L778.1 253.1 L786.1 253.5 L794.2 254.1 L802.1 254.9 L810.0 256.0 L817.7 257.3 L825.4 258.9 L832.8 260.7 L840.1 262.6 L847.2 264.9 L854.1 267.3 L860.8 269.9 L867.2 272.7 L873.4 275.7 L879.2 278.9 L884.8 282.3 L890.1 285.8 L895.0 289.5 L899.6 293.3 L903.8 297.2 L907.7 301.3 L911.1 305.5 L914.2 309.8 L916.9 314.2 L919.2 318.6 L921.1 323.1 L922.6 327.7 L923.7 332.2 L924.3 336.9 L924.5 341.5"/>
<path d="M924.5 341.5 L924.3 346.1 L923.7 350.8 L922.6 355.3 L921.1 359.9 L919.2 364.4 L916.9 368.8 L914.2 373.2 L911.1 377.5 L907.7 381.7 L903.8 385.8 L899.6 389.7 L895.0 393.5 L890.1 397.2 L884.8 400.7 L879.2 404.1 L873.4 407.3 L867.2 410.3 L860.8 413.1 L854.1 415.7 L847.2 418.1 L840.1 420.4 L832.8 422.3 L825.4 424.1 L817.7 425.7 L810.0 427.0 L802.1 428.1 L794.2 428.9 L786.1 429.5 L778.1 429.9 L770.0 430.0 L761.9 429.9 L753.9 429.5 L745.8 428.9 L737.9 428.1 L730.0 427.0 L722.3 425.7 L714.6 424.1 L707.2 422.3 L699.9 420.4 L692.8 418.1 L685.9 415.7 L679.2 413.1 L672.8 410.3 L666.6 407.3 L660.8 404.1 L655.2 400.7 L649.9 397.2 L645.0 393.5 L640.4 389.7 L636.2 385.8 L632.3 381.7 L628.9 377.5 L625.8 373.2 L623.1 368.8 L620.8 364.4 L618.9 359.9 L617.4 355.3 L616.3 350.8 L615.7 346.1 L615.5 341.5"/>
<path d="M850.6 309.0 L850.4 312.6 L849.6 316.3 L848.4 319.9 L846.7 323.4 L844.5 326.8 L841.8 330.1 L838.7 333.3 L835.2 336.3 L831.3 339.2 L827.0 341.9 L822.3 344.4 L817.4 346.6 L812.1 348.6 L806.6 350.4 L800.8 352.0 L794.9 353.2 L788.8 354.2 L782.6 354.9 L776.3 355.4 L770.0 355.5 L763.7 355.4 L757.4 354.9 L751.2 354.2 L745.1 353.2 L739.2 352.0 L733.4 350.4 L727.9 348.6 L722.6 346.6 L717.7 344.4 L713.0 341.9 L708.7 339.2 L704.8 336.3 L701.3 333.3 L698.2 330.1 L695.5 326.8 L693.3 323.4 L691.6 319.9 L690.4 316.3 L689.6 312.6 L689.4 309.0 L689.6 305.4 L690.4 301.7 L691.6 298.1 L693.3 294.6 L695.5 291.2 L698.2 287.9 L701.3 284.7 L704.8 281.7 L708.7 278.8 L713.0 276.1 L717.7 273.6 L722.6 271.4 L727.9 269.4 L733.4 267.6 L739.2 266.0 L745.1 264.8 L751.2 263.8 L757.4 263.1 L763.7 262.6 L770.0 262.5 L776.3 262.6 L782.6 263.1 L788.8 263.8 L794.9 264.8 L800.8 266.0 L806.6 267.6 L812.1 269.4 L817.4 271.4 L822.3 273.6 L827.0 276.1 L831.3 278.8 L835.2 281.7 L838.7 284.7 L841.8 287.9 L844.5 291.2 L846.7 294.6 L848.4 298.1 L849.6 301.7 L850.4 305.4 L850.6 309.0 Z"/>
<path d="M850.6 342.0 L850.5 344.4 L850.2 346.9 L849.6 349.3 L848.8 351.7 L847.9 354.0 L846.7 356.4 L845.2 358.7 L843.6 360.9 L841.8 363.1 L839.8 365.2 L837.6 367.3 L835.2 369.3 L832.6 371.3 L829.9 373.1 L827.0 374.9 L823.9 376.6 L820.7 378.1 L817.4 379.6 L813.9 381.0 L810.3 382.3 L806.6 383.4 L802.8 384.5 L798.9 385.4 L794.9 386.2 L790.9 386.9 L786.8 387.5 L782.6 387.9 L778.4 388.2 L774.2 388.4 L770.0 388.5 L765.8 388.4 L761.6 388.2 L757.4 387.9 L753.2 387.5 L749.1 386.9 L745.1 386.2 L741.1 385.4 L737.2 384.5 L733.4 383.4 L729.7 382.3 L726.1 381.0 L722.6 379.6 L719.3 378.1 L716.1 376.6 L713.0 374.9 L710.1 373.1 L707.4 371.3 L704.8 369.3 L702.4 367.3 L700.2 365.2 L698.2 363.1 L696.4 360.9 L694.8 358.7 L693.3 356.4 L692.1 354.0 L691.2 351.7 L690.4 349.3 L689.8 346.9 L689.5 344.4 L689.4 342.0"/>
<path d="M825.0 308.6 L824.8 311.0 L824.3 313.4 L823.5 315.7 L822.3 318.1 L820.8 320.3 L819.0 322.5 L816.9 324.6 L814.5 326.6 L811.8 328.5 L808.9 330.2 L805.7 331.9 L802.3 333.4 L798.7 334.7 L795.0 335.9 L791.0 336.9 L787.0 337.7 L782.8 338.4 L778.6 338.8 L774.3 339.1 L770.0 339.2 L765.7 339.1 L761.4 338.8 L757.2 338.4 L753.0 337.7 L749.0 336.9 L745.0 335.9 L741.3 334.7 L737.7 333.4 L734.3 331.9 L731.1 330.2 L728.2 328.5 L725.5 326.6 L723.1 324.6 L721.0 322.5 L719.2 320.3 L717.7 318.1 L716.5 315.7 L715.7 313.4 L715.2 311.0 L715.0 308.6 L715.2 306.2 L715.7 303.8 L716.5 301.5 L717.7 299.1 L719.2 296.9 L721.0 294.7 L723.1 292.6 L725.5 290.6 L728.2 288.7 L731.1 287.0 L734.3 285.3 L737.7 283.8 L741.3 282.5 L745.0 281.3 L749.0 280.3 L753.0 279.5 L757.2 278.8 L761.4 278.4 L765.7 278.1 L770.0 278.0 L774.3 278.1 L778.6 278.4 L782.8 278.8 L787.0 279.5 L791.0 280.3 L795.0 281.3 L798.7 282.5 L802.3 283.8 L805.7 285.3 L808.9 287.0 L811.8 288.7 L814.5 290.6 L816.9 292.6 L819.0 294.7 L820.8 296.9 L822.3 299.1 L823.5 301.5 L824.3 303.8 L824.8 306.2 L825.0 308.6 Z"/>
<path d="M575 469 L617 493.5 L643 493.5 L761 471"/>
<path d="M617 493.5 L616.5 532.3"/>
<path d="M965 301 L924 371"/>
<path d="M922.2 437.9 L921.1 440.9 L919.9 443.9 L918.5 446.9 L916.9 449.8 L915.2 452.8 L913.2 455.7 L911.1 458.5 L908.9 461.3 L906.4 464.0 L903.8 466.8 L901.0 469.4 L898.1 472.0 L895.0 474.5 L891.7 477.0 L888.4 479.4 L884.8 481.7 L881.1 484.0 L877.3 486.2 L873.4 488.3 L869.3 490.3 L865.1 492.2 L860.8 494.1 L856.4 495.9 L851.9 497.6 L847.2 499.1 L842.5 500.6 L837.7 502.0 L832.8 503.3 L827.9 504.6 L822.8 505.7 L817.7 506.7 L812.6 507.6 L807.4 508.4 L802.1 509.1 L796.8 509.7 L791.5 510.1 L786.1 510.5 L780.8 510.8 L775.4 510.9 L770.0 511.0"/>
</g>
<!--/MODEL-->
</svg>
</body></html>
